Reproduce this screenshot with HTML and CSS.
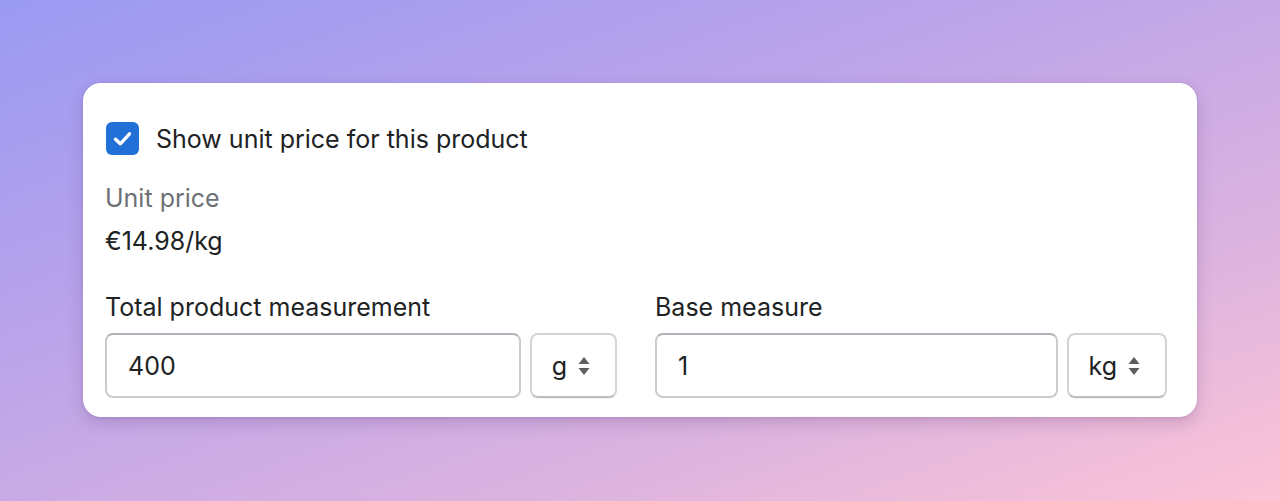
FILE: index.html
```html
<!DOCTYPE html>
<html lang="en">
<head>
<meta charset="utf-8">
<title>Unit price</title>
<link rel="stylesheet" href="styles.css">
</head>
<body>
<div class="stage">
  <div class="card">
    <label class="check-row">
      <span class="checkbox">
        <svg viewBox="0 0 33 33" width="33" height="33"><path d="M9.5 17.2l4.8 4.6L23.5 11.8" fill="none" stroke="#fff" stroke-width="3.4" stroke-linecap="round" stroke-linejoin="round"/></svg>
      </span>
      <span class="check-label">Show unit price for this product</span>
    </label>
    <div class="muted">Unit price</div>
    <div class="value">€14.98/kg</div>
    <div class="fields">
      <div class="field">
        <div class="label">Total product measurement</div>
        <div class="controls">
          <div class="input">400</div>
          <div class="select">g <span class="arrows"><svg viewBox="0 0 12 20" width="12" height="20"><path d="M6 1L11.5 8H0.5z M6 19L11.5 12H0.5z" fill="#5c5f62"/></svg></span></div>
        </div>
      </div>
      <div class="field">
        <div class="label">Base measure</div>
        <div class="controls">
          <div class="input">1</div>
          <div class="select">kg <span class="arrows"><svg viewBox="0 0 12 20" width="12" height="20"><path d="M6 1L11.5 8H0.5z M6 19L11.5 12H0.5z" fill="#5c5f62"/></svg></span></div>
        </div>
      </div>
    </div>
  </div>
</div>
</body>
</html>
```

FILE: styles.css
```css
* { box-sizing: border-box; }
html, body { margin: 0; height: 100%; }
body {
  font-family: Inter, "Noto Sans", sans-serif;
  color: #202223;
  background: linear-gradient(160deg, #9a9af3 0%, #b9a3ea 35%, #dab2e0 70%, #fcc4d6 100%);
  overflow: hidden;
}
.stage {
  padding: 83px 83px 0 83px;
}
.card {
  width: 1114px;
  height: 334px;
  background: #fff;
  border-radius: 18px;
  padding: 39px 30px 19px 22px;
  box-shadow: 0 6px 16px rgba(90, 50, 110, 0.22), 0 1px 3px rgba(90, 50, 110, 0.12);
}
.check-row {
  display: flex;
  align-items: center;
  height: 33px;
}
.checkbox {
  width: 33px;
  height: 33px;
  border-radius: 6px;
  background: #2170d8;
  display: flex;
  align-items: center;
  justify-content: center;
  margin-left: 1px;
}
.checkbox svg { display: block; }
.check-label {
  margin-left: 17px;
  font-size: 25px;
  line-height: 32px;
}
.muted {
  margin-top: 27px;
  font-size: 25px;
  line-height: 32px;
  color: #6d7175;
}
.value {
  margin-top: 11px;
  font-size: 25px;
  line-height: 32px;
}
.fields {
  margin-top: 34px;
  display: grid;
  grid-template-columns: 512px 512px;
  column-gap: 38px;
}
.label {
  font-size: 25px;
  line-height: 32px;
  margin-bottom: 10px;
}
.controls {
  display: flex;
  gap: 9px;
  height: 65px;
}
.input {
  flex: 1;
  border: 2px solid #c9cccf;
  border-top-color: #aeb4b9;
  border-radius: 8px;
  padding: 0 21px;
  display: flex;
  align-items: center;
  font-size: 25px;
}
.select {
  border: 2px solid #d2d5d8;
  border-bottom-color: #babfc3;
  border-radius: 8px;
  padding: 0 25px 0 20px;
  display: flex;
  align-items: center;
  font-size: 25px;
  gap: 11px;
  box-shadow: 0 1px 1px rgba(0,0,0,0.06);
}
.arrows { display: flex; align-items: center; }
.arrows svg { display: block; }
```
